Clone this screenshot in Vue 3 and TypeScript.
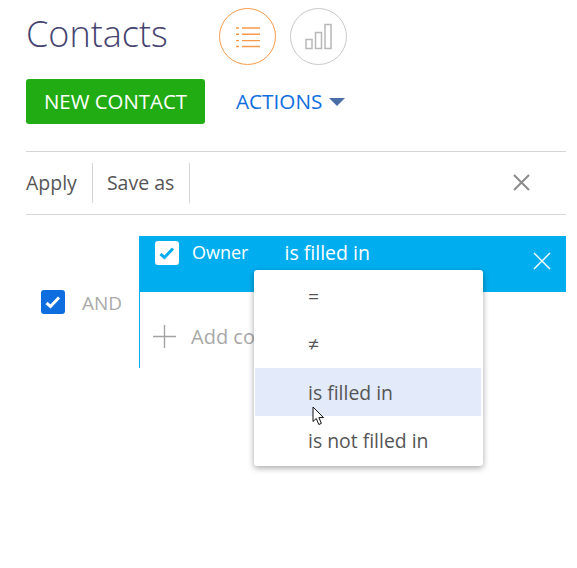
<script setup lang="ts">
const options: string[] = ['=', '≠', 'is filled in', 'is not filled in']
</script>

<template>
  <div class="page">
    <header class="head">
      <h1 class="title">Contacts</h1>
      <div class="views">
        <button class="circle active" aria-label="List">
          <svg width="26" height="22" viewBox="0 0 26 22" fill="none" stroke="#f79a4b" stroke-width="1.400">
            <path d="M1 2h3M7 2h18M1 8.300h3M7 8.300h18M1 14.600h3M7 14.600h18M1 20.500h3M7 20.500h18" />
          </svg>
        </button>
        <button class="circle" aria-label="Chart">
          <svg width="27" height="27" viewBox="0 0 27 27" fill="none" stroke="#b8b8b8" stroke-width="1.500">
            <path d="M1 16.500h6v9H1zM10.500 9.500h6v16h-6zM20 1.500h6v24h-6z" />
          </svg>
        </button>
      </div>
    </header>

    <div class="actions">
      <button class="new">NEW CONTACT</button>
      <button class="menu">ACTIONS<span class="caret"></span></button>
    </div>

    <div class="toolbar">
      <span class="tool first">Apply</span>
      <span class="tool">Save as</span>
      <svg class="close" width="17" height="17" viewBox="0 0 17 17" stroke="#8c8c8c" stroke-width="2">
        <path d="M1 1l15 15M16 1L1 16" />
      </svg>
    </div>

    <section class="filter">
      <div class="logic">
        <span class="check blue">
          <svg width="16" height="13" viewBox="0 0 16 13" fill="none" stroke="#fff" stroke-width="3"><path d="M1.500 7l4 3.500 8.500-9" /></svg>
        </span>
        <span class="and">AND</span>
      </div>
      <div class="group">
        <div class="cond">
          <span class="check white">
            <svg width="16" height="13" viewBox="0 0 16 13" fill="none" stroke="#00aeef" stroke-width="3"><path d="M1.500 7l4 3.500 8.500-9" /></svg>
          </span>
          <span class="owner">Owner</span>
          <span class="op">is filled in</span>
          <svg class="cond-x" width="18" height="18" viewBox="0 0 18 18" stroke="#fff" stroke-width="1.400">
            <path d="M1 1l16 16M17 1L1 17" />
          </svg>
        </div>
        <div class="add">
          <svg width="23" height="23" viewBox="0 0 23 23" stroke="#a3a3a3" stroke-width="1.400">
            <path d="M11.500 0v23M0 11.500h23" />
          </svg>
          <span>Add condition</span>
        </div>

        <ul class="dropdown">
          <li v-for="o in options" :key="o" :class="{ hover: o === 'is filled in', ne: o === '≠' }">{{ o }}</li>
        </ul>
        <svg class="cursor" width="14" height="20" viewBox="0 0 14 20">
          <path d="M1 1v14.500l3.300-3 2.500 6 2.600-1.100-2.500-5.800h4.600z" fill="#fff" stroke="#111" stroke-width="1" />
        </svg>
      </div>
    </section>
  </div>
</template>

<style scoped>
.page {
  width: 577px;
  height: 568px;
  box-sizing: border-box;
  padding: 8px 11px 0 26px;
  font-family: "Open Sans", sans-serif;
  background: #fff;
  overflow: hidden;
}
.head {
  display: flex;
  align-items: center;
  height: 57px;
}
.title {
  margin: 0;
  width: 193px;
  font-size: 36px;
  font-weight: 300;
  line-height: 52px;
  color: #45436f;
  position: relative;
  top: -3px;
}
.views {
  display: flex;
  gap: 14px;
}
.circle {
  width: 57px;
  height: 57px;
  padding: 0;
  border: 1.500px solid #c9c9c9;
  border-radius: 50%;
  background: #fff;
  display: flex;
  align-items: center;
  justify-content: center;
}
.circle.active {
  border-color: #f79a4b;
}
.actions {
  display: flex;
  align-items: center;
  margin-top: 14px;
}
.new {
  width: 179px;
  height: 45px;
  border: 0;
  border-radius: 3px;
  background: #22ac14;
  color: #fff;
  font: 400 20.400px "Open Sans", sans-serif;
  padding: 0 0 2px;
}
.menu {
  margin-left: 31px;
  border: 0;
  padding: 0 0 2px;
  background: none;
  color: #0e6ee0;
  font: 400 20.700px "Open Sans", sans-serif;
  display: flex;
  align-items: center;
}
.caret {
  margin-left: 7px;
  margin-top: 2px;
  border-left: 8px solid transparent;
  border-right: 8px solid transparent;
  border-top: 8px solid #4a6ea8;
}
.toolbar {
  margin-top: 27px;
  height: 62px;
  border-top: 1px solid #d5d5d5;
  border-bottom: 1px solid #d5d5d5;
  display: flex;
  align-items: center;
  position: relative;
  font-size: 19.500px;
  color: #555;
}
.tool {
  height: 40px;
  line-height: 39px;
  padding: 0 15px 0 14px;
  border-right: 1px solid #d5d5d5;
}
.tool.first {
  padding-left: 0;
}
.close {
  margin-left: auto;
  margin-right: 36px;
  position: relative;
  top: -1px;
}
.filter {
  display: flex;
  margin-top: 21px;
}
.logic {
  width: 113px;
  height: 132px;
  display: flex;
  align-items: center;
  padding: 0 0 0 15px;
  box-sizing: border-box;
}
.check {
  width: 24px;
  height: 24px;
  border-radius: 3px;
  display: flex;
  align-items: center;
  justify-content: center;
  flex: none;
}
.check.blue {
  background: #0e6ee0;
}
.check.white {
  background: #fff;
}
.and {
  margin-left: 17px;
  font-size: 19px;
  line-height: 26px;
  padding-top: 2px;
  color: #aaa;
}
.group {
  flex: 1;
  position: relative;
  height: 132px;
  border-left: 1px solid #00aeef;
}
.cond {
  margin-left: -1px;
  height: 56px;
  background: #00aeef;
  color: #fff;
  display: flex;
  align-items: flex-start;
  padding: 5px 0 0 16px;
  box-sizing: border-box;
  font-size: 18px;
}
.owner {
  margin-left: 13px;
  line-height: 22px;
}
.op {
  margin-left: 36px;
  font-size: 19.500px;
  line-height: 24px;
}
.cond-x {
  margin-left: auto;
  margin-right: 15px;
  margin-top: 11px;
}
.add {
  display: flex;
  align-items: center;
  margin-top: 31px;
  padding-left: 13px;
  font-size: 20px;
  color: #a8a8a8;
  white-space: nowrap;
}
.add span {
  margin-left: 15px;
  width: 63px;
  overflow: hidden;
}
.dropdown {
  position: absolute;
  left: 114px;
  top: 34px;
  width: 229px;
  margin: 0;
  padding: 2px 1px;
  box-sizing: border-box;
  list-style: none;
  background: #fff;
  border-radius: 3px;
  box-shadow: 0 2px 6px rgba(0, 0, 0, 0.35);
}
.dropdown li {
  height: 48px;
  line-height: 50px;
  padding-left: 53px;
  font-size: 19.400px;
  color: #555;
}
.dropdown li.ne {
  line-height: 47px;
}
.dropdown li.hover {
  background: #e3eaf9;
  margin-right: 1px;
}
.cursor {
  position: absolute;
  left: 172px;
  top: 170px;
}
</style>
